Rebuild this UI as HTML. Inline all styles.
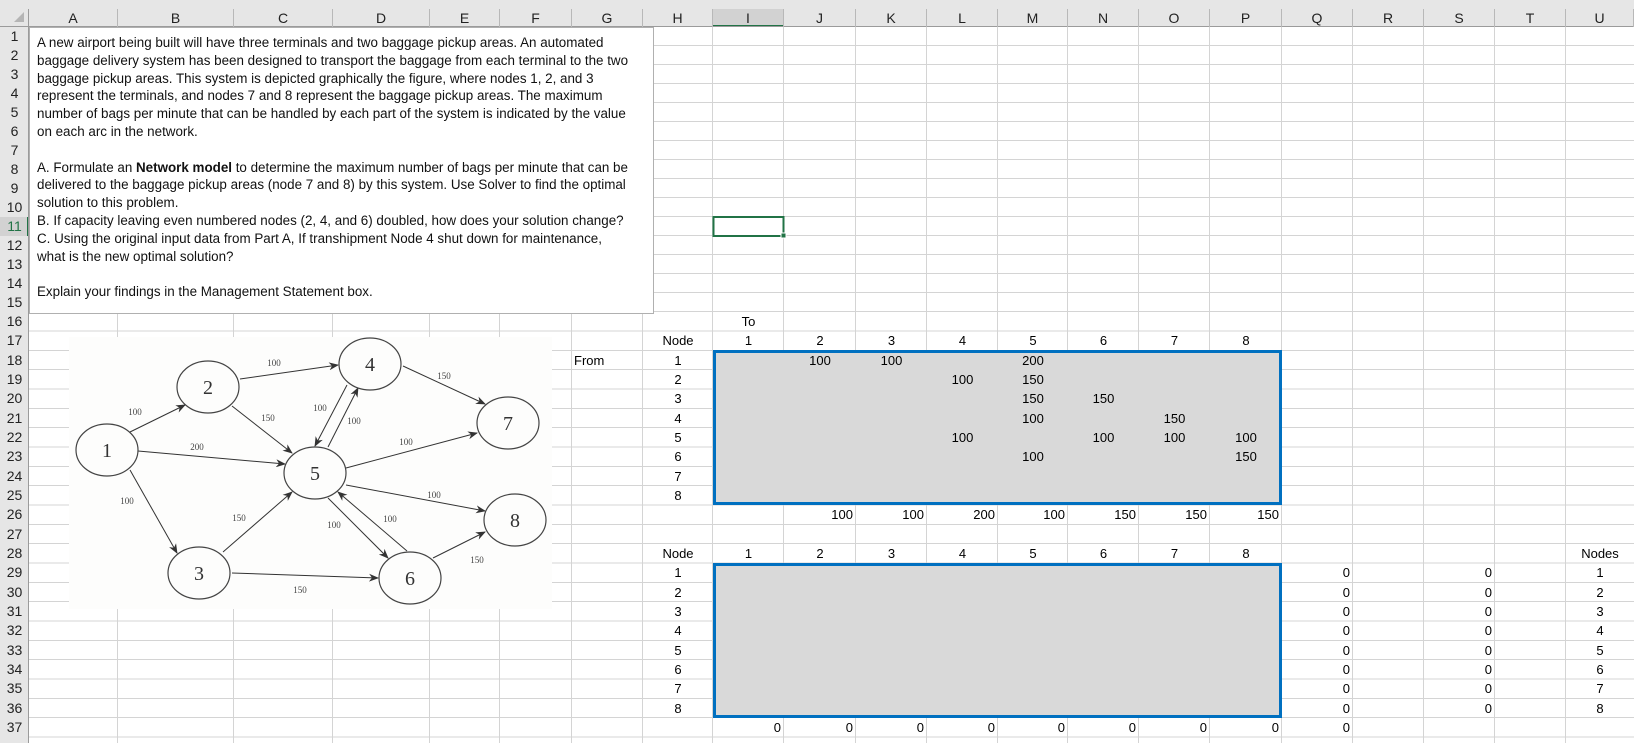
<!DOCTYPE html>
<html><head><meta charset="utf-8"><style>
*{margin:0;padding:0;box-sizing:border-box}
body{width:1634px;height:743px;overflow:hidden;background:#fff;position:relative;font-family:"Liberation Sans",Arial,sans-serif;font-size:13px;color:#000}
.a{position:absolute}
.c{position:absolute;height:19px;line-height:20px;font-size:13px;white-space:nowrap}
.ctr{text-align:center}.rt{text-align:right;padding-right:3px}
.ch{position:absolute;top:9px;height:18px;line-height:18px;text-align:center;font-size:14px;color:#222;border-right:1px solid #b8b8b8}
.rh{position:absolute;left:0;width:29px;text-align:center;font-size:14px;color:#222}
</style></head><body>
<svg class="a" style="left:0;top:0" width="1634" height="743">
<rect x="0" y="0" width="1634" height="27" fill="#e6e6e6"/>
<rect x="0" y="0" width="29" height="743" fill="#e6e6e6"/>
<rect x="713" y="9" width="71" height="18" fill="#d2d2d2"/>
<rect x="713" y="25" width="71" height="2" fill="#217346"/>
<rect x="0" y="217" width="29" height="19" fill="#d2d2d2"/>
<rect x="27" y="217" width="2" height="19" fill="#217346"/>
<line x1="0" y1="26.5" x2="1634" y2="26.5" stroke="#9b9b9b"/>
<line x1="28.5" y1="9" x2="28.5" y2="743" stroke="#9b9b9b"/>
<polygon points="14,22 24,22 24,12" fill="#b5b5b5"/>
<g stroke="#d4d4d4" stroke-width="1">
<line x1="117.5" y1="27" x2="117.5" y2="743"/><line x1="233.5" y1="27" x2="233.5" y2="743"/><line x1="332.5" y1="27" x2="332.5" y2="743"/><line x1="429.5" y1="27" x2="429.5" y2="743"/><line x1="499.5" y1="27" x2="499.5" y2="743"/><line x1="571.5" y1="27" x2="571.5" y2="743"/><line x1="642.5" y1="27" x2="642.5" y2="743"/><line x1="712.5" y1="27" x2="712.5" y2="743"/><line x1="783.5" y1="27" x2="783.5" y2="743"/><line x1="855.5" y1="27" x2="855.5" y2="743"/><line x1="926.5" y1="27" x2="926.5" y2="743"/><line x1="997.5" y1="27" x2="997.5" y2="743"/><line x1="1067.5" y1="27" x2="1067.5" y2="743"/><line x1="1138.5" y1="27" x2="1138.5" y2="743"/><line x1="1209.5" y1="27" x2="1209.5" y2="743"/><line x1="1281.5" y1="27" x2="1281.5" y2="743"/><line x1="1352.5" y1="27" x2="1352.5" y2="743"/><line x1="1423.5" y1="27" x2="1423.5" y2="743"/><line x1="1494.5" y1="27" x2="1494.5" y2="743"/><line x1="1565.5" y1="27" x2="1565.5" y2="743"/>
<line x1="29" y1="45.5" x2="1634" y2="45.5"/><line x1="29" y1="64.5" x2="1634" y2="64.5"/><line x1="29" y1="83.5" x2="1634" y2="83.5"/><line x1="29" y1="102.5" x2="1634" y2="102.5"/><line x1="29" y1="121.5" x2="1634" y2="121.5"/><line x1="29" y1="140.5" x2="1634" y2="140.5"/><line x1="29" y1="159.5" x2="1634" y2="159.5"/><line x1="29" y1="178.5" x2="1634" y2="178.5"/><line x1="29" y1="197.5" x2="1634" y2="197.5"/><line x1="29" y1="216.5" x2="1634" y2="216.5"/><line x1="29" y1="235.5" x2="1634" y2="235.5"/><line x1="29" y1="254.5" x2="1634" y2="254.5"/><line x1="29" y1="273.5" x2="1634" y2="273.5"/><line x1="29" y1="292.5" x2="1634" y2="292.5"/><line x1="29" y1="311.5" x2="1634" y2="311.5"/>
<line x1="29" y1="331" x2="1634" y2="331"/><line x1="29" y1="350.5" x2="1634" y2="350.5"/><line x1="29" y1="369.5" x2="1634" y2="369.5"/><line x1="29" y1="389" x2="1634" y2="389"/><line x1="29" y1="408.5" x2="1634" y2="408.5"/><line x1="29" y1="427.5" x2="1634" y2="427.5"/><line x1="29" y1="447" x2="1634" y2="447"/><line x1="29" y1="466.5" x2="1634" y2="466.5"/><line x1="29" y1="485.5" x2="1634" y2="485.5"/><line x1="29" y1="505" x2="1634" y2="505"/><line x1="29" y1="524.5" x2="1634" y2="524.5"/><line x1="29" y1="543.5" x2="1634" y2="543.5"/><line x1="29" y1="563" x2="1634" y2="563"/><line x1="29" y1="582.5" x2="1634" y2="582.5"/><line x1="29" y1="601.5" x2="1634" y2="601.5"/><line x1="29" y1="621" x2="1634" y2="621"/><line x1="29" y1="640.5" x2="1634" y2="640.5"/><line x1="29" y1="659.5" x2="1634" y2="659.5"/><line x1="29" y1="679" x2="1634" y2="679"/><line x1="29" y1="698.5" x2="1634" y2="698.5"/><line x1="29" y1="717.5" x2="1634" y2="717.5"/><line x1="29" y1="737" x2="1634" y2="737"/>
</g>
<rect x="29.5" y="27.5" width="624" height="286" fill="#fff" stroke="#b0b0b0"/>
<rect x="714.5" y="351.5" width="566" height="152" fill="#d9d9d9" stroke="#0070c0" stroke-width="3"/>
<rect x="714.5" y="564.5" width="566" height="152" fill="#d9d9d9" stroke="#0070c0" stroke-width="3"/>
<rect x="713.5" y="217" width="70" height="19" fill="none" stroke="#217346" stroke-width="2"/>
<rect x="781" y="233" width="5" height="5" fill="#217346" stroke="#fff" stroke-width="1"/>
<g>
<rect x="69" y="337" width="483" height="272" fill="#fdfdfc"/>
<defs><marker id="ar" markerWidth="10" markerHeight="8" refX="9" refY="4" orient="auto" markerUnits="userSpaceOnUse"><path d="M0,0 L10,4 L0,8 L3,4 z" fill="#333"/></marker></defs>
<g stroke="#333" stroke-width="1" marker-end="url(#ar)">
<line x1="130" y1="432" x2="185" y2="405"/>
<line x1="138" y1="451" x2="285" y2="464"/>
<line x1="130" y1="470" x2="177" y2="553"/>
<line x1="240" y1="379" x2="338" y2="365"/>
<line x1="232" y1="406" x2="292" y2="453"/>
<line x1="347" y1="385" x2="315" y2="446"/>
<line x1="328" y1="447" x2="358" y2="388"/>
<line x1="403" y1="366" x2="485" y2="404"/>
<line x1="346" y1="468" x2="477" y2="433"/>
<line x1="346" y1="485" x2="485" y2="511"/>
<line x1="328" y1="498" x2="388" y2="558"/>
<line x1="407" y1="551" x2="338" y2="492"/>
<line x1="223" y1="552" x2="292" y2="492"/>
<line x1="232" y1="573" x2="378" y2="578"/>
<line x1="433" y1="558" x2="485" y2="532"/>
</g>
<g fill="#fdfdfc" stroke="#444" stroke-width="1.2">
<ellipse cx="107" cy="450" rx="31" ry="26"/>
<ellipse cx="208" cy="387" rx="31" ry="26"/>
<ellipse cx="370" cy="364" rx="31" ry="26"/>
<ellipse cx="508" cy="423" rx="31" ry="26"/>
<ellipse cx="315" cy="473" rx="31" ry="26"/>
<ellipse cx="515" cy="520" rx="31" ry="26"/>
<ellipse cx="199" cy="573" rx="31" ry="26"/>
<ellipse cx="410" cy="578" rx="31" ry="26"/>
</g>
<g font-family="Liberation Serif,serif" font-size="20" fill="#333" text-anchor="middle">
<text x="107" y="457">1</text><text x="208" y="394">2</text><text x="370" y="371">4</text><text x="508" y="430">7</text><text x="315" y="480">5</text><text x="515" y="527">8</text><text x="199" y="580">3</text><text x="410" y="585">6</text>
</g>
<g font-family="Liberation Serif,serif" font-size="9" fill="#444" text-anchor="middle">
<text x="135" y="415">100</text><text x="197" y="450">200</text><text x="127" y="504">100</text><text x="274" y="366">100</text><text x="268" y="421">150</text><text x="320" y="411">100</text><text x="354" y="424">100</text><text x="444" y="379">150</text><text x="406" y="445">100</text><text x="434" y="498">100</text><text x="334" y="528">100</text><text x="390" y="522">100</text><text x="239" y="521">150</text><text x="477" y="563">150</text><text x="300" y="593">150</text>
</g>
</g>
</svg>

<div class="ch" style="left:29px;width:89px">A</div><div class="ch" style="left:118px;width:116px">B</div><div class="ch" style="left:234px;width:99px">C</div><div class="ch" style="left:333px;width:97px">D</div><div class="ch" style="left:430px;width:70px">E</div><div class="ch" style="left:500px;width:72px">F</div><div class="ch" style="left:572px;width:71px">G</div><div class="ch" style="left:643px;width:70px">H</div><div class="ch" style="left:713px;width:71px">I</div><div class="ch" style="left:784px;width:72px">J</div><div class="ch" style="left:856px;width:71px">K</div><div class="ch" style="left:927px;width:71px">L</div><div class="ch" style="left:998px;width:70px">M</div><div class="ch" style="left:1068px;width:71px">N</div><div class="ch" style="left:1139px;width:71px">O</div><div class="ch" style="left:1210px;width:72px">P</div><div class="ch" style="left:1282px;width:71px">Q</div><div class="ch" style="left:1353px;width:71px">R</div><div class="ch" style="left:1424px;width:71px">S</div><div class="ch" style="left:1495px;width:71px">T</div><div class="ch" style="left:1566px;width:68px">U</div>

<div class="rh" style="top:27px;line-height:19px">1<br>2<br>3<br>4<br>5<br>6<br>7<br>8<br>9<br>10<br><span style="color:#217346">11</span><br>12<br>13<br>14<br>15</div>
<div class="rh" style="top:312px;line-height:19.33px">16<br>17<br>18<br>19<br>20<br>21<br>22<br>23<br>24<br>25<br>26<br>27<br>28<br>29<br>30<br>31<br>32<br>33<br>34<br>35<br>36<br>37</div>

<div class="a" style="left:37px;top:34px;width:616px;font-size:13.4px;line-height:17.8px;color:#111;white-space:nowrap">A new airport being built will have three terminals and two baggage pickup areas. An automated<br>baggage delivery system has been designed to transport the baggage from each terminal to the two<br>baggage pickup areas. This system is depicted graphically the figure, where nodes 1, 2, and 3<br>represent the terminals, and nodes 7 and 8 represent the baggage pickup areas. The maximum<br>number of bags per minute that can be handled by each part of the system is indicated by the value<br>on each arc in the network.<br>&nbsp;<br>A. Formulate an <b>Network model</b> to determine the maximum number of bags per minute that can be<br>delivered to the baggage pickup areas (node 7 and 8) by this system. Use Solver to find the optimal<br>solution to this problem.<br>B. If capacity leaving even numbered nodes (2, 4, and 6) doubled, how does your solution change?<br>C. Using the original input data from Part A, If transhipment Node 4 shut down for maintenance,<br>what is the new optimal solution?<br>&nbsp;<br>Explain your findings in the Management Statement box.</div>

<div class="c ctr" style="left:713px;width:71px;top:312px">To</div>
<div class="c ctr" style="left:643px;width:70px;top:331px">Node</div>
<div class="c ctr" style="left:713px;width:71px;top:331px">1</div><div class="c ctr" style="left:784px;width:72px;top:331px">2</div><div class="c ctr" style="left:856px;width:71px;top:331px">3</div><div class="c ctr" style="left:927px;width:71px;top:331px">4</div><div class="c ctr" style="left:998px;width:70px;top:331px">5</div><div class="c ctr" style="left:1068px;width:71px;top:331px">6</div><div class="c ctr" style="left:1139px;width:71px;top:331px">7</div><div class="c ctr" style="left:1210px;width:72px;top:331px">8</div>
<div class="c" style="left:574px;top:350.7px">From</div>
<div class="a ctr" style="left:643px;width:70px;top:350.7px;line-height:19.33px;text-align:center">1<br>2<br>3<br>4<br>5<br>6<br>7<br>8</div>
<div class="c ctr" style="left:784px;width:72px;top:350.7px">100</div><div class="c ctr" style="left:856px;width:71px;top:350.7px">100</div><div class="c ctr" style="left:998px;width:70px;top:350.7px">200</div>
<div class="c ctr" style="left:927px;width:71px;top:370px">100</div><div class="c ctr" style="left:998px;width:70px;top:370px">150</div>
<div class="c ctr" style="left:998px;width:70px;top:389.3px">150</div><div class="c ctr" style="left:1068px;width:71px;top:389.3px">150</div>
<div class="c ctr" style="left:998px;width:70px;top:408.7px">100</div><div class="c ctr" style="left:1139px;width:71px;top:408.7px">150</div>
<div class="c ctr" style="left:927px;width:71px;top:428px">100</div><div class="c ctr" style="left:1068px;width:71px;top:428px">100</div><div class="c ctr" style="left:1139px;width:71px;top:428px">100</div><div class="c ctr" style="left:1210px;width:72px;top:428px">100</div>
<div class="c ctr" style="left:998px;width:70px;top:447.3px">100</div><div class="c ctr" style="left:1210px;width:72px;top:447.3px">150</div>
<div class="c rt" style="left:784px;width:72px;top:505.3px">100</div><div class="c rt" style="left:856px;width:71px;top:505.3px">100</div><div class="c rt" style="left:927px;width:71px;top:505.3px">200</div><div class="c rt" style="left:998px;width:70px;top:505.3px">100</div><div class="c rt" style="left:1068px;width:71px;top:505.3px">150</div><div class="c rt" style="left:1139px;width:71px;top:505.3px">150</div><div class="c rt" style="left:1210px;width:72px;top:505.3px">150</div>

<div class="c ctr" style="left:643px;width:70px;top:544px">Node</div>
<div class="c ctr" style="left:713px;width:71px;top:544px">1</div><div class="c ctr" style="left:784px;width:72px;top:544px">2</div><div class="c ctr" style="left:856px;width:71px;top:544px">3</div><div class="c ctr" style="left:927px;width:71px;top:544px">4</div><div class="c ctr" style="left:998px;width:70px;top:544px">5</div><div class="c ctr" style="left:1068px;width:71px;top:544px">6</div><div class="c ctr" style="left:1139px;width:71px;top:544px">7</div><div class="c ctr" style="left:1210px;width:72px;top:544px">8</div>
<div class="c ctr" style="left:1566px;width:68px;top:544px">Nodes</div>
<div class="a" style="left:643px;width:70px;top:563.3px;line-height:19.33px;text-align:center">1<br>2<br>3<br>4<br>5<br>6<br>7<br>8</div>
<div class="a" style="left:1566px;width:68px;top:563.3px;line-height:19.33px;text-align:center">1<br>2<br>3<br>4<br>5<br>6<br>7<br>8</div>
<div class="a" style="left:1282px;width:71px;top:563.3px;line-height:19.33px;text-align:right;padding-right:3px">0<br>0<br>0<br>0<br>0<br>0<br>0<br>0<br>0</div>
<div class="a" style="left:1424px;width:71px;top:563.3px;line-height:19.33px;text-align:right;padding-right:3px">0<br>0<br>0<br>0<br>0<br>0<br>0<br>0</div>
<div class="c rt" style="left:713px;width:71px;top:718px">0</div><div class="c rt" style="left:784px;width:72px;top:718px">0</div><div class="c rt" style="left:856px;width:71px;top:718px">0</div><div class="c rt" style="left:927px;width:71px;top:718px">0</div><div class="c rt" style="left:998px;width:70px;top:718px">0</div><div class="c rt" style="left:1068px;width:71px;top:718px">0</div><div class="c rt" style="left:1139px;width:71px;top:718px">0</div><div class="c rt" style="left:1210px;width:72px;top:718px">0</div>
</body></html>
